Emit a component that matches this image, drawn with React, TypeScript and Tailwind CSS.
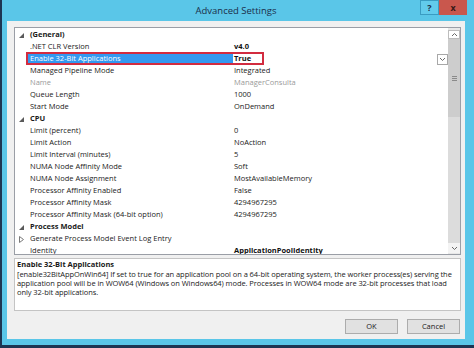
import React from "react";

type Row = {
  cat?: boolean;
  name: string;
  value?: string;
  bold?: boolean;
  gray?: boolean;
  selected?: boolean;
  collapsed?: boolean;
};

const rows: Row[] = [
  { cat: true, name: "(General)" },
  { name: ".NET CLR Version", value: "v4.0", bold: true },
  { name: "Enable 32-Bit Applications", value: "True", bold: true, selected: true },
  { name: "Managed Pipeline Mode", value: "Integrated" },
  { name: "Name", value: "ManagerConsulta", gray: true },
  { name: "Queue Length", value: "1000" },
  { name: "Start Mode", value: "OnDemand" },
  { cat: true, name: "CPU" },
  { name: "Limit (percent)", value: "0" },
  { name: "Limit Action", value: "NoAction" },
  { name: "Limit Interval (minutes)", value: "5" },
  { name: "NUMA Node Affinity Mode", value: "Soft" },
  { name: "NUMA Node Assignment", value: "MostAvailableMemory" },
  { name: "Processor Affinity Enabled", value: "False" },
  { name: "Processor Affinity Mask", value: "4294967295" },
  { name: "Processor Affinity Mask (64-bit option)", value: "4294967295" },
  { cat: true, name: "Process Model" },
  { name: "Generate Process Model Event Log Entry", value: "", collapsed: true },
  { name: "Identity", value: "ApplicationPoolIdentity", bold: true },
];

function ExpandedGlyph() {
  return (
    <svg width="5" height="5" viewBox="0 0 5 5">
      <polygon points="5,0 5,5 0,5" fill="#5a5a5a" />
    </svg>
  );
}

function CollapsedGlyph() {
  return (
    <svg width="5" height="7" viewBox="0 0 5 7">
      <polygon points="0.5,0.5 4.5,3.5 0.5,6.5" fill="none" stroke="#7a7a7a" strokeWidth="1" />
    </svg>
  );
}

function Chevron({ up }: { up?: boolean }) {
  return (
    <svg width="7" height="5" viewBox="0 0 7 5">
      <polyline
        points={up ? "1,4 3.5,1.5 6,4" : "1,1 3.5,3.5 6,1"}
        fill="none"
        stroke="#6a6a6a"
        strokeWidth="1"
      />
    </svg>
  );
}

export default function App() {
  return (
    <div
      className="w-[474px] h-[348px] bg-[#1d3552] overflow-hidden"
      style={{ fontFamily: '"Open Sans", "Noto Sans", sans-serif' }}
    >
      <div className="ml-[2px] w-[472px] h-[345px] bg-[#5ac6e8] flex flex-col pl-[5px] pr-[9px] pb-[6px]">
        {/* Title bar */}
        <div className="relative h-[21px] shrink-0 flex items-center justify-center">
          <span className="text-[9.5px] text-[#1b2f4a] leading-none mt-[1px]">Advanced Settings</span>
          <div className="absolute top-0 right-[-2px] flex">
            <div className="w-[19px] h-[15px] border border-[#3a9cc2] bg-[#62cbec] flex items-center justify-center text-[9px] font-bold text-[#1b2f4a] leading-none">
              ?
            </div>
            <div className="w-[28px] h-[15px] bg-[#c9574d] flex items-center justify-center text-[9px] font-bold text-[#3a1a18] leading-none">
              x
            </div>
          </div>
        </div>

        {/* Client area */}
        <div className="flex-1 bg-[#f0f0f0] flex flex-col pl-[7px] pr-[4px] pt-[6px]">
          {/* Property grid */}
          <div className="h-[228px] border border-[#9a9ea6] bg-white flex overflow-hidden">
            <div className="relative flex-1 pt-[1px] overflow-hidden">
              {rows.map((r, i) => (
                <div key={i} className="relative h-[12px] flex items-center text-[7.5px] leading-none">
                  <div className="w-[12px] h-full flex items-center justify-end pr-[3px]">
                    {r.cat ? <ExpandedGlyph /> : r.collapsed ? <CollapsedGlyph /> : null}
                  </div>
                  {r.cat ? (
                    <div className="pl-[3px] font-bold text-[#1a1a1a] whitespace-nowrap">{r.name}</div>
                  ) : (
                    <>
                      <div
                        className={
                          "w-[206px] h-full flex items-center pl-[3px] whitespace-nowrap " +
                          (r.selected ? "bg-[#3399f0] text-white" : r.gray ? "text-[#9a9a9a]" : "text-[#1a1a1a]")
                        }
                      >
                        {r.name}
                      </div>
                      <div className="flex-1 h-full flex items-center justify-between pl-[1px] whitespace-nowrap">
                        <span
                          className={
                            (r.bold ? "font-bold text-[#111] " : "") + (r.gray ? "text-[#9a9a9a]" : "text-[#1a1a1a]")
                          }
                        >
                          {r.value}
                        </span>
                        {r.selected && (
                          <div className="w-[11px] h-[11px] border border-[#a8a8a8] bg-white flex items-center justify-center">
                            <Chevron />
                          </div>
                        )}
                      </div>
                    </>
                  )}
                  {r.selected && (
                    <div className="absolute left-[11px] top-[-1px] w-[238px] h-[13px] border-2 border-[#d22c40] pointer-events-none" />
                  )}
                </div>
              ))}
            </div>
            {/* Scrollbar */}
            <div className="w-[12px] flex flex-col bg-[#e8e8e8] pt-[2px] pb-[1px]">
              <div className="h-[9px] border border-[#bdbdbd] bg-white flex items-center justify-center">
                <Chevron up />
              </div>
              <div className="h-[78px] bg-[#cdcdcd] flex items-center justify-center">
                <div className="flex flex-col gap-[1px]">
                  <div className="w-[5px] h-px bg-[#8a8a8a]" />
                  <div className="w-[5px] h-px bg-[#8a8a8a]" />
                  <div className="w-[5px] h-px bg-[#8a8a8a]" />
                </div>
              </div>
              <div className="flex-1 bg-[#dcdcdc]" />
              <div className="h-[10px] bg-[#f4f4f4] flex items-center justify-center">
                <Chevron />
              </div>
            </div>
          </div>

          {/* Description */}
          <div className="mt-[3px] h-[53px] border border-[#c4c4c4] bg-white pl-[2px] text-[#1a1a1a]">
            <div className="text-[7.5px] font-bold leading-[11px]">Enable 32-Bit Applications</div>
            <div className="text-[7.5px] leading-[9px] whitespace-nowrap tracking-[-0.07px]">
              <div>
                [enable32BitAppOnWin64] If set to true for an application pool on a 64-bit operating system, the worker process(es) serving the
              </div>
              <div>
                application pool will be in WOW64 (Windows on Windows64) mode. Processes in WOW64 mode are 32-bit processes that load
              </div>
              <div>only 32-bit applications.</div>
            </div>
          </div>

          {/* Buttons */}
          <div className="mt-[8px] flex justify-end gap-[9px] pr-[1px]">
            <div className="w-[53px] h-[15px] border border-[#acacac] bg-[#e1e1e1] flex items-center justify-center text-[7.5px] text-[#1a1a1a]">
              OK
            </div>
            <div className="w-[53px] h-[15px] border border-[#acacac] bg-[#e1e1e1] flex items-center justify-center text-[7.5px] text-[#1a1a1a]">
              Cancel
            </div>
          </div>
        </div>
      </div>
    </div>
  );
}
